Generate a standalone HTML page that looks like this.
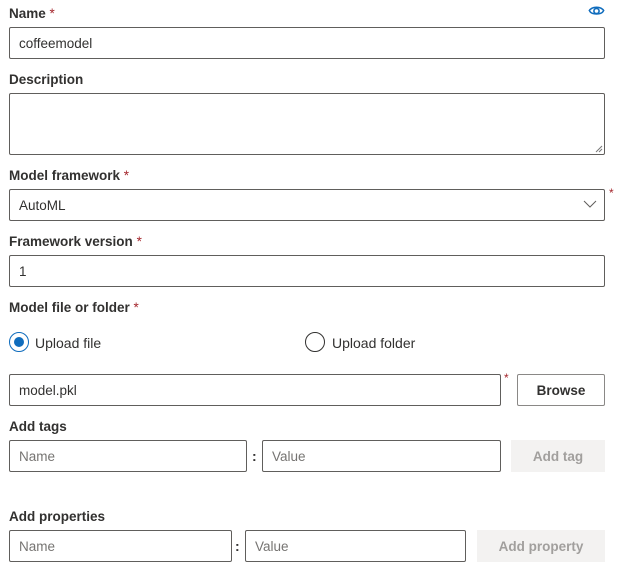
<!DOCTYPE html>
<html><head><style>
body{margin:0;width:620px;height:576px;background:#fff;font-family:"Liberation Sans",sans-serif;font-size:14px;color:#323130;position:relative;overflow:hidden}
.a{position:absolute}
.l{position:absolute;left:9px;font-weight:bold;font-size:13.5px;color:#323130}
.r{color:#a4262c;font-weight:normal}
.i{position:absolute;border:1px solid #605e5c;border-radius:2px;box-sizing:border-box;padding-left:9px;line-height:32px;font-size:13.5px}
.p{color:#767472}
.b{position:absolute;box-sizing:border-box;text-align:center;line-height:33px;font-size:13.5px;font-weight:bold}
</style></head><body>
<div class="l" style="top:6px">Name <span class="r">*</span></div>
<svg class="a" style="left:588px;top:5px" width="17" height="12" viewBox="0 0 17 12"><path d="M1 6C4 1 13 1 16 6" fill="none" stroke="#0f6cbd" stroke-width="1.6"/><path d="M1.5 6C4 10 13 10 15.5 6" fill="none" stroke="#0f6cbd" stroke-width="1.6"/><circle cx="8.5" cy="6" r="2.6" fill="none" stroke="#0f6cbd" stroke-width="1.6"/></svg>
<div class="i" style="left:9px;top:27px;width:596px;height:32px">coffeemodel</div>
<div class="l" style="top:72px">Description</div>
<div class="i" style="left:9px;top:93px;width:596px;height:62px"></div>
<svg class="a" style="left:595px;top:145px" width="8" height="8"><path d="M1 7L7 1M4 7L7 4" stroke="#777" stroke-width="1"/></svg>
<div class="l" style="top:168px">Model framework <span class="r">*</span></div>
<div class="i" style="left:9px;top:189px;width:596px;height:32px">AutoML</div>
<svg class="a" style="left:583px;top:200px" width="14" height="8"><path d="M1 1L7 7L13 1" fill="none" stroke="#605e5c" stroke-width="1"/></svg>
<div class="a r" style="left:609px;top:186px;font-size:12px">*</div>
<div class="l" style="top:234px">Framework version <span class="r">*</span></div>
<div class="i" style="left:9px;top:255px;width:596px;height:32px">1</div>
<div class="l" style="top:300px">Model file or folder <span class="r">*</span></div>
<div class="a" style="left:9px;top:332px;width:20px;height:20px;border:1px solid #0f6cbd;border-radius:50%;box-sizing:border-box"><div style="margin:4px;width:10px;height:10px;border-radius:50%;background:#0f6cbd"></div></div>
<div class="a" style="left:35px;top:335px">Upload file</div>
<div class="a" style="left:305px;top:332px;width:20px;height:20px;border:1px solid #323130;border-radius:50%;box-sizing:border-box"></div>
<div class="a" style="left:332px;top:335px">Upload folder</div>
<div class="i" style="left:9px;top:374px;width:492px;height:32px">model.pkl</div>
<div class="a r" style="left:504px;top:371px;font-size:12px">*</div>
<div class="b" style="left:517px;top:374px;width:88px;height:32px;border:1px solid #8a8886;border-radius:2px;line-height:31px">Browse</div>
<div class="l" style="top:419px">Add tags</div>
<div class="i p" style="left:9px;top:440px;width:238px;height:32px">Name</div>
<div class="a" style="left:252px;top:448px;font-weight:bold">:</div>
<div class="i p" style="left:262px;top:440px;width:239px;height:32px">Value</div>
<div class="b" style="left:511px;top:440px;width:94px;height:32px;background:#f3f2f1;color:#a19f9d">Add tag</div>
<div class="l" style="top:509px">Add properties</div>
<div class="i p" style="left:9px;top:530px;width:223px;height:32px">Name</div>
<div class="a" style="left:235px;top:538px;font-weight:bold">:</div>
<div class="i p" style="left:245px;top:530px;width:221px;height:32px">Value</div>
<div class="b" style="left:477px;top:530px;width:128px;height:32px;background:#f3f2f1;color:#a19f9d">Add property</div>
</body></html>
